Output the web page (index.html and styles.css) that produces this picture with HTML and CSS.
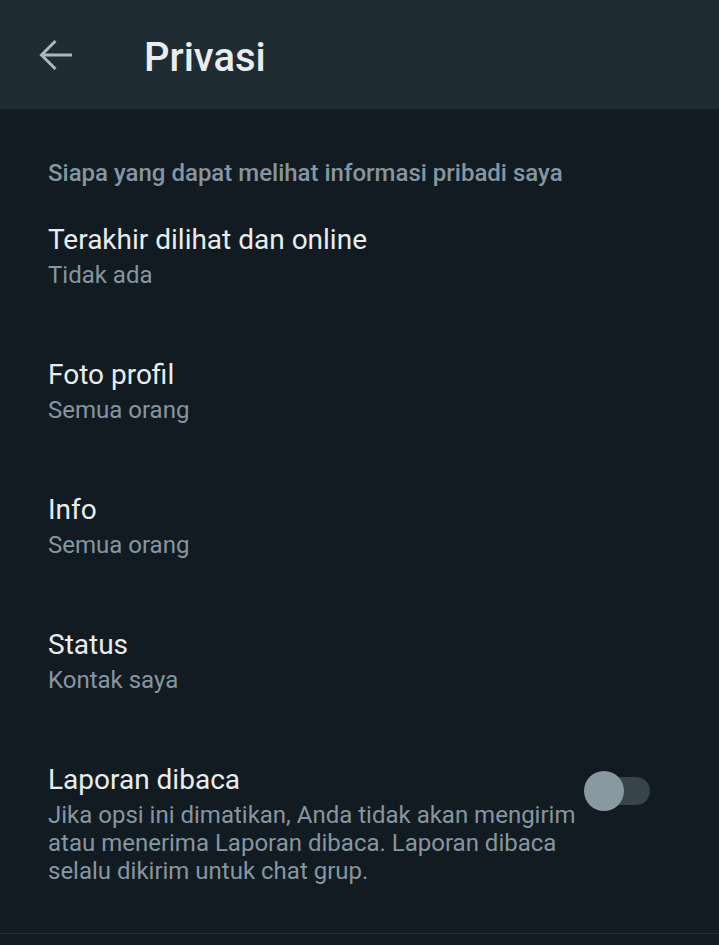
FILE: index.html
```html
<!DOCTYPE html>
<html lang="id">
<head>
<meta charset="utf-8">
<title>Privasi</title>
<link rel="stylesheet" href="styles.css">
</head>
<body>
<header class="appbar">
  <svg class="back" width="36" height="36" viewBox="0 0 36 36" aria-hidden="true">
    <path d="M34 18H4M17.5 4L3.5 18L17.5 32" fill="none" stroke="#aeb7bc" stroke-width="3" stroke-linecap="butt" stroke-linejoin="miter"/>
  </svg>
  <h1 class="title">Privasi</h1>
</header>
<main class="content">
  <div class="section-title">Siapa yang dapat melihat informasi pribadi saya</div>
  <div class="row">
    <div class="row-title">Terakhir dilihat dan online</div>
    <div class="row-sub">Tidak ada</div>
  </div>
  <div class="row">
    <div class="row-title">Foto profil</div>
    <div class="row-sub">Semua orang</div>
  </div>
  <div class="row">
    <div class="row-title">Info</div>
    <div class="row-sub">Semua orang</div>
  </div>
  <div class="row">
    <div class="row-title">Status</div>
    <div class="row-sub">Kontak saya</div>
  </div>
  <div class="row row-toggle">
    <div class="row-text">
      <div class="row-title">Laporan dibaca</div>
      <div class="row-sub">Jika opsi ini dimatikan, Anda tidak akan mengirim atau menerima Laporan dibaca. Laporan dibaca selalu dikirim untuk chat grup.</div>
    </div>
    <div class="switch"><span class="track"></span><span class="thumb"></span></div>
  </div>
  <div class="divider"></div>
</main>
</body>
</html>
```
FILE: styles.css
```css
* { box-sizing: border-box; }
html, body {
  margin: 0;
  padding: 0;
  background: #121b22;
  font-family: Roboto, "Noto Sans", "Liberation Sans", sans-serif;
  height: 100%;
}
.appbar {
  height: 109px;
  background: #1f2c34;
  display: flex;
  align-items: center;
  padding-left: 38px;
}
.back { display: block; flex: none; }
.title {
  margin: 6px 0 0 70px;
  font-size: 40px;
  line-height: 48px;
  font-weight: 500;
  color: #e9edef;
}
.content {
  padding-top: 50px;
}
.section-title {
  padding-left: 48px;
  font-size: 24px;
  line-height: 28px;
  font-weight: 500;
  color: #8696a0;
}
.row {
  padding: 35px 0 33px 48px;
}
.row-title {
  font-size: 28px;
  line-height: 36px;
  color: #e9edef;
}
.row-sub {
  margin-top: 3px;
  font-size: 24px;
  line-height: 28px;
  color: #8696a0;
}
.row-toggle {
  display: flex;
  align-items: flex-start;
  padding-right: 69px;
  padding-bottom: 48px;
}
.row-text {
  width: 536px;
}
.switch {
  position: relative;
  flex: none;
  width: 66px;
  height: 40px;
  margin-left: auto;
  margin-top: 9px;
}
.track {
  position: absolute;
  left: 10px;
  right: 0;
  top: 6px;
  height: 28px;
  border-radius: 14px;
  background: #37444c;
}
.thumb {
  position: absolute;
  left: 0;
  top: 0;
  width: 40px;
  height: 40px;
  border-radius: 50%;
  background: #8a98a2;
}
.divider {
  height: 1px;
  background: #232e36;
}
```
